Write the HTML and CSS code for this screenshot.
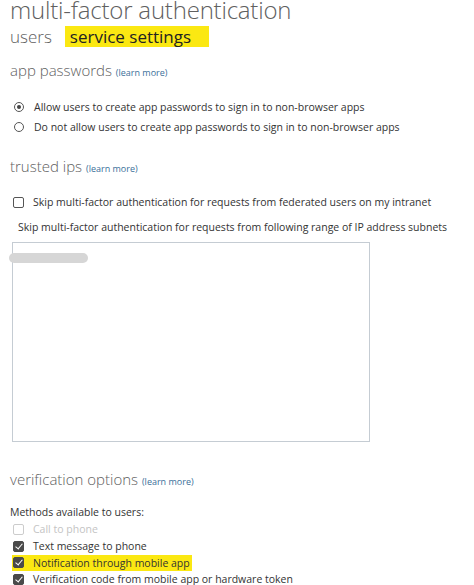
FILE: index.html
```html
<!DOCTYPE html>
<html lang="en">
<head>
    <meta charset="UTF-8">
    <title>multi-factor authentication</title>
    <link rel="stylesheet" href="styles.css">
</head>
<body>
    <div class="page">
        <h1 class="title">multi-factor authentication</h1>
        <div class="tabs">
            <span class="tab">users</span>
            <span class="tab active">service settings</span>
        </div>

        <section class="section first">
            <h2 class="section-title">app passwords <a class="learn" href="#">(learn more)</a></h2>
            <div class="options">
                <label class="option radio-row"><span class="radio checked"></span>Allow users to create app passwords to sign in to non-browser apps</label>
                <label class="option radio-row"><span class="radio"></span>Do not allow users to create app passwords to sign in to non-browser apps</label>
            </div>
        </section>

        <section class="section">
            <h2 class="section-title">trusted ips <a class="learn" href="#">(learn more)</a></h2>
            <label class="option fed"><span class="check"></span>Skip multi-factor authentication for requests from federated users on my intranet</label>
            <p class="subnets">Skip multi-factor authentication for requests from following range of IP address subnets</p>
            <div class="ip-box">
                <span class="redacted"></span>
            </div>
        </section>

        <section class="section verify">
            <h2 class="section-title">verification options <a class="learn" href="#">(learn more)</a></h2>
            <p class="methods">Methods available to users:</p>
            <div class="checks">
                <label class="option disabled"><span class="check"></span>Call to phone</label>
                <label class="option"><span class="check on"></span>Text message to phone</label>
                <label class="option mark"><span class="check on"></span>Notification through mobile app</label>
                <label class="option"><span class="check on"></span>Verification code from mobile app or hardware token</label>
            </div>
        </section>
    </div>
</body>
</html>
```

FILE: styles.css
```css
:root {
    --text-color: #333;
    --head-color: #606060;
    --link-color: #3a6f9a;
    --highlight: #fbe812;
    --box-border: #c5ccd3;
}

body {
    margin: 0;
    background: #fff;
    color: var(--text-color);
    font-family: "Open Sans", "Noto Sans", sans-serif;
    overflow: hidden;
}

.page {
    padding: 0 10px;
}

.title {
    margin: 0;
    font-size: 24px;
    font-weight: 300;
    line-height: 20px;
    color: var(--head-color);
    letter-spacing: -0.2px;
}

.tabs {
    display: flex;
    align-items: center;
    gap: 8px;
    margin-top: 6px;
    font-size: 17px;
    line-height: 21px;
}

.tab {
    color: var(--head-color);
    font-weight: 300;
    padding: 0 5px 0 0;
}

.tab.active {
    color: #222;
    font-weight: 400;
    background: var(--highlight);
    padding: 0 18px 0 5px;
}

.section {
    margin-top: 17px;
}

.section.first {
    margin-top: 11px;
}

.section.verify {
    margin-top: 25px;
}

.section-title {
    margin: 0;
    font-size: 15px;
    font-weight: 300;
    line-height: 24px;
    color: var(--head-color);
}

.learn {
    font-size: 9px;
    color: var(--link-color);
    text-decoration: none;
    font-weight: 400;
}

.options {
    margin-top: 12px;
}

.option {
    display: flex;
    align-items: center;
    font-size: 10.5px;
    line-height: 17px;
    color: var(--text-color);
}

.option.radio-row {
    line-height: 20px;
}

.radio {
    width: 10px;
    height: 10px;
    border: 1px solid #555;
    border-radius: 50%;
    margin: 0 10px 0 4px;
    box-sizing: border-box;
    position: relative;
}

.radio.checked::after {
    content: "";
    position: absolute;
    left: 2px;
    top: 2px;
    width: 4px;
    height: 4px;
    border-radius: 50%;
    background: #444;
}

.check {
    width: 11px;
    height: 11px;
    border: 1px solid #555;
    border-radius: 2px;
    margin: 0 9px 0 3px;
    box-sizing: border-box;
    position: relative;
    flex-shrink: 0;
}

.check.on {
    background: #4a4a4a;
    border-color: #4a4a4a;
}

.check.on::after {
    content: "";
    position: absolute;
    left: 3px;
    top: 0;
    width: 3px;
    height: 6px;
    border: solid #fff;
    border-width: 0 1.5px 1.5px 0;
    transform: rotate(40deg);
}

.fed {
    margin-top: 13px;
}

.subnets {
    margin: 8px 0 0 8px;
    font-size: 10.5px;
    line-height: 17px;
}

.ip-box {
    margin: 6px 0 0 2px;
    width: 358px;
    height: 200px;
    border: 1px solid var(--box-border);
    box-sizing: border-box;
    position: relative;
}

.redacted {
    position: absolute;
    left: -4px;
    top: 10px;
    width: 79px;
    height: 10px;
    border-radius: 5px;
    background: #d6d6d6;
}

.methods {
    margin: 10px 0 0;
    font-size: 10.5px;
    line-height: 17px;
}

.checks .option {
    line-height: 16.8px;
}

.option.disabled {
    color: #c4c4c4;
}

.option.disabled .check {
    border-color: #ccc;
}

.option.mark {
    background: var(--highlight);
    width: 180px;
    margin-left: 2px;
}

.option.mark .check {
    margin-left: 1px;
}
```
